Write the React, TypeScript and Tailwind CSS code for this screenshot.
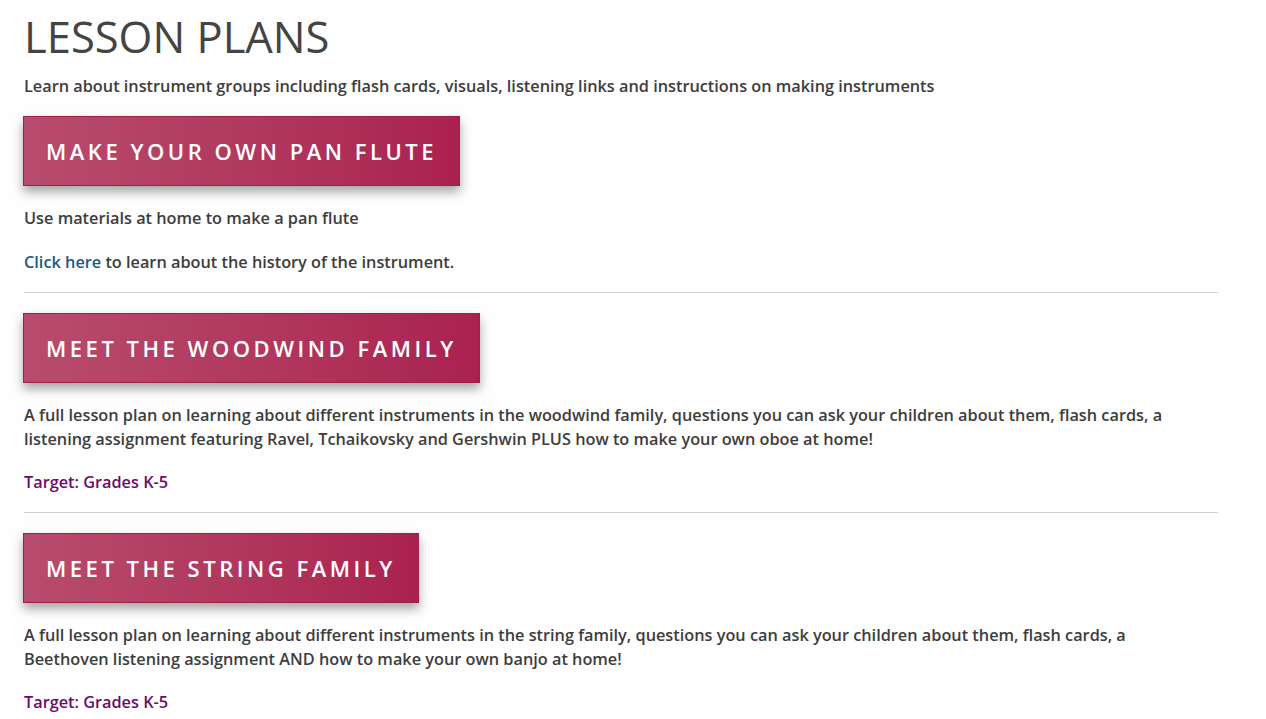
const sections = [
  {
    title: "MAKE YOUR OWN PAN FLUTE",
    body: "Use materials at home to make a pan flute",
    link: true,
  },
  {
    title: "MEET THE WOODWIND FAMILY",
    body: "A full lesson plan on learning about different instruments in the woodwind family, questions you can ask your children about them, flash cards, a listening assignment featuring Ravel, Tchaikovsky and Gershwin PLUS how to make your own oboe at home!",
    target: "Target: Grades K-5",
  },
  {
    title: "MEET THE STRING FAMILY",
    body: "A full lesson plan on learning about different instruments in the string family, questions you can ask your children about them, flash cards, a Beethoven listening assignment AND how to make your own banjo at home!",
    target: "Target: Grades K-5",
  },
];

export default function App() {
  return (
    <div className="min-h-screen bg-[#fefefe] px-6 font-['Open_Sans',sans-serif] text-[#3d3d3d]">
      <div className="w-[1194px]">
        <h1 className="pt-[10px] text-[43.5px] leading-[54px] text-[#444]">LESSON PLANS</h1>
        <p className="mt-[10px] text-[16.3px] leading-6 font-semibold">
          Learn about instrument groups including flash cards, visuals, listening links and instructions on making instruments
        </p>
        {sections.map((s, i) => (
          <div key={s.title} className={i > 0 ? "border-t border-[#cfcfcf] pt-5" : "pt-[18px]"}>
            <h2 className="-ml-px inline-block border border-[#9e1f47] bg-gradient-to-r from-[#b84c6e] to-[#aa2150] px-[22px] py-[19px] text-[22px] leading-[30px] font-semibold tracking-[0.16em] text-white shadow-[0_6px_10px_rgba(0,0,0,0.35)]">
              {s.title}
            </h2>
            <p className="mt-5 max-w-[1170px] text-[16.3px] leading-6 font-semibold">{s.body}</p>
            {s.link && (
              <p className="mt-5 text-[16.3px] leading-6 font-semibold">
                <a className="text-[#1d5a85]" href="#">Click here</a> to learn about the history of the instrument.
              </p>
            )}
            {s.target && (
              <p className="mt-[19px] text-[16.3px] leading-6 font-semibold text-[#6b0d6b]">{s.target}</p>
            )}
            <div className="h-[18px]" />
          </div>
        ))}
      </div>
    </div>
  );
}
